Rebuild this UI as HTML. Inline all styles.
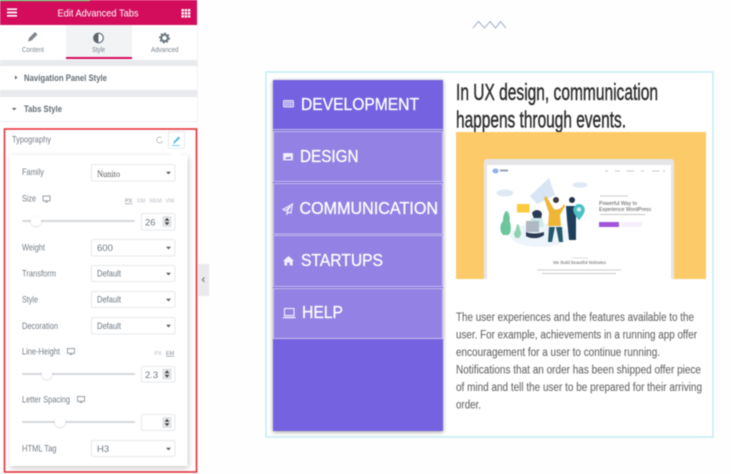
<!DOCTYPE html>
<html><head><meta charset="utf-8">
<style>
html,body{margin:0;padding:0;background:#fff;width:731px;height:474px;overflow:hidden}
svg{display:block;filter:blur(.45px)}
text{font-family:"Liberation Sans",sans-serif}
.l{font-size:9.5px;fill:#757d85}
.v{font-size:9.5px;fill:#6d7882}
.t{font-size:17.5px;fill:#fff;stroke:#fff;stroke-width:.3}
.h{font-size:23.5px;fill:#2a2a2a;stroke:#2a2a2a;stroke-width:.4}
.p{font-size:11.5px;fill:#666;stroke:#666;stroke-width:.08}
.sel{fill:#fff;stroke:#dfe2e6;stroke-width:.8}
.u{font-size:5.5px;fill:#b4bac0}
</style></head><body>
<svg width="731" height="474" viewBox="0 0 731 474" xmlns="http://www.w3.org/2000/svg">
<defs>
<filter id="s" x="-20%" y="-20%" width="140%" height="140%"><feDropShadow dx="1" dy="2" stdDeviation="3" flood-color="#000" flood-opacity=".22"/></filter>
<filter id="s2" x="-20%" y="-20%" width="140%" height="140%"><feDropShadow dx="0" dy="1" stdDeviation="2" flood-color="#000" flood-opacity=".4"/></filter>
<filter id="s3" x="-50%" y="-50%" width="200%" height="200%"><feDropShadow dx="0" dy=".5" stdDeviation=".8" flood-color="#000" flood-opacity=".25"/></filter>
<g id="arrow"><path d="M-2.5 -1.200H2.500L0 1.400Z" fill="#55595e"/></g>
<g id="mon" fill="none" stroke="#8d959d" stroke-width=".9"><rect x="-3.500" y="-3" width="7" height="4.800"/><path d="M-1.500 3H1.500"/></g>
<g id="spin"><rect x="-4" y="-5" width="8" height="10" fill="#e4e6e9" stroke="#c6cacf" stroke-width=".4"/><path d="M-2.400 -.8H2.400L0 -3.800ZM-2.400 .8H2.400L0 3.800Z" fill="#444"/></g>
</defs>
<rect width="731" height="474" fill="#fefefe"/>
<!-- sidebar -->
<rect x="0" y="0" width="197" height="474" fill="#fff"/>
<rect x="197" y="0" width="1" height="474" fill="#f1f2f4"/>
<rect x="0" y="0" width="197" height="25" fill="#d30c5c"/>
<rect x="0" y="0" width="90" height="1.200" fill="#5fb85f"/>
<path d="M7 9.200H17M7 12.500H17M7 15.800H17" stroke="#fff" stroke-width="1.700"/>
<text x="57.500" y="16.500" fill="#fff" textLength="81" lengthAdjust="spacingAndGlyphs" style="font-size:10.500px">Edit Advanced Tabs</text>
<path d="M181.500 9h2.400v2.400h-2.400zM184.700 9h2.400v2.400h-2.400zM187.900 9h2.400v2.400h-2.400zM181.500 12.100h2.400v2.400h-2.400zM184.700 12.100h2.400v2.400h-2.400zM187.900 12.100h2.400v2.400h-2.400zM181.500 15.200h2.400v2.400h-2.400zM184.700 15.200h2.400v2.400h-2.400zM187.900 15.200h2.400v2.400h-2.400z" fill="#fff"/>
<rect x="66" y="25" width="66" height="34" fill="#f2f3f5"/>
<rect x="66" y="57" width="66" height="2" fill="#d30c5c"/>
<rect x="0" y="60" width="197" height="6" fill="#e8eaed"/>
<path d="M28 41.500l1-3.500 6-6 2.500 2.500-6 6z" fill="#7d868e"/>
<text x="22" y="52" fill="#7d868e" textLength="22" lengthAdjust="spacingAndGlyphs" style="font-size:7.500px">Content</text>
<circle cx="98.500" cy="38" r="4.800" fill="#fff" stroke="#5c666f" stroke-width="1.100"/>
<path d="M98.500 33.200a4.800 4.800 0 0 0 0 9.600z" fill="#5c666f"/>
<text x="92" y="52" fill="#7d868e" textLength="13" lengthAdjust="spacingAndGlyphs" style="font-size:7.500px">Style</text>
<circle cx="164.500" cy="38" r="3.300" fill="none" stroke="#6d7882" stroke-width="2.200"/>
<circle cx="164.500" cy="38" r="4.800" fill="none" stroke="#6d7882" stroke-width="1.400" stroke-dasharray="1.800 1.900"/>
<text x="151" y="52" fill="#7d868e" textLength="27.500" lengthAdjust="spacingAndGlyphs" style="font-size:7.500px">Advanced</text>
<path d="M15 75.500v4l2.400-2z" fill="#555c63"/>
<text x="24" y="81" font-weight="bold" fill="#656e76" textLength="83" lengthAdjust="spacingAndGlyphs" style="font-size:9.500px">Navigation Panel Style</text>
<rect x="0" y="90" width="197" height="7" fill="#e8eaed"/>
<path d="M12 108h4.400l-2.200 2.400z" fill="#555c63"/>
<text x="24" y="112" font-weight="bold" fill="#656e76" textLength="38" lengthAdjust="spacingAndGlyphs" style="font-size:9.500px">Tabs Style</text>
<rect x="0" y="121" width="197" height="1" fill="#eceef0"/>
<!-- red box -->
<rect x="4.500" y="129" width="192" height="343" fill="#fff" stroke="#e6323a" stroke-width="1.600"/>
<text x="12" y="142.500" class="l" textLength="39" lengthAdjust="spacingAndGlyphs">Typography</text>
<path d="M161.600 137.600a3 3 0 1 0 .8 3.600" fill="none" stroke="#b4bac0" stroke-width=".9"/>
<rect x="168.500" y="131.500" width="16" height="17" rx="1" fill="#fff" stroke="#e3e6e9" stroke-width=".8"/>
<path d="M173 144l1-2.500 4.500-5 1.500 1.500-4.800 4.800z" fill="#4ab7e0"/>
<path d="M172 145.500h8" stroke="#4ab7e0" stroke-width=".7"/>
<!-- popup -->
<rect x="9.500" y="155" width="178" height="311" rx="2" fill="#fff" filter="url(#s)"/>
<path d="M171 155l5-5 5 5z" fill="#fff"/>
<text x="22" y="175" class="l" textLength="22" lengthAdjust="spacingAndGlyphs">Family</text>
<rect class="sel" x="91.400" y="164.500" width="83.500" height="16.500" rx="1.500"/>
<text x="97" y="177" fill="#555" style="font-family:'Liberation Serif',serif;font-size:9.500px" textLength="23" lengthAdjust="spacingAndGlyphs">Nunito</text>
<use href="#arrow" x="168.500" y="173"/>
<text x="22" y="201.500" class="l" textLength="14" lengthAdjust="spacingAndGlyphs">Size</text>
<use href="#mon" x="46.500" y="199"/>
<text x="125" y="202.500" class="u" style="fill:#7d858d;text-decoration:underline">PX</text>
<text x="137" y="202.500" class="u">EM</text>
<text x="149.500" y="202.500" class="u">REM</text>
<text x="165.500" y="202.500" class="u">VW</text>
<rect x="22" y="220" width="113" height="2" rx="1" fill="#d5d8dc"/>
<circle cx="36" cy="221" r="5.300" fill="#fff" filter="url(#s3)"/>
<rect class="sel" x="141.400" y="213.500" width="33.500" height="16.500" rx="1.500"/>
<text x="145" y="225.500" class="v">26</text>
<use href="#spin" x="167" y="221.500"/>
<text x="22" y="250.500" class="l" textLength="23" lengthAdjust="spacingAndGlyphs">Weight</text>
<rect class="sel" x="91.400" y="239.500" width="83.500" height="16.500" rx="1.500"/>
<text x="97" y="251" class="v">600</text>
<use href="#arrow" x="168.500" y="248"/>
<text x="22" y="276.500" class="l" textLength="34" lengthAdjust="spacingAndGlyphs">Transform</text>
<rect class="sel" x="91.400" y="265.500" width="83.500" height="16" rx="1.500"/>
<text x="97" y="276.500" class="v" textLength="24" lengthAdjust="spacingAndGlyphs">Default</text>
<use href="#arrow" x="168.500" y="274"/>
<text x="22" y="302.500" class="l" textLength="16" lengthAdjust="spacingAndGlyphs">Style</text>
<rect class="sel" x="91.400" y="291.500" width="83.500" height="16" rx="1.500"/>
<text x="97" y="302.500" class="v" textLength="24" lengthAdjust="spacingAndGlyphs">Default</text>
<use href="#arrow" x="168.500" y="300"/>
<text x="22" y="329" class="l" textLength="36" lengthAdjust="spacingAndGlyphs">Decoration</text>
<rect class="sel" x="91.400" y="317.500" width="83.500" height="16.500" rx="1.500"/>
<text x="97" y="329" class="v" textLength="24" lengthAdjust="spacingAndGlyphs">Default</text>
<use href="#arrow" x="168.500" y="326"/>
<text x="22" y="354.500" class="l" textLength="38" lengthAdjust="spacingAndGlyphs">Line-Height</text>
<use href="#mon" x="71" y="351.500"/>
<text x="154.500" y="355" class="u">PX</text>
<text x="166" y="355" class="u" style="fill:#7d858d;text-decoration:underline">EM</text>
<rect x="22" y="373" width="113" height="2" rx="1" fill="#d5d8dc"/>
<circle cx="47" cy="374" r="5.300" fill="#fff" filter="url(#s3)"/>
<rect class="sel" x="141.400" y="366.500" width="33.500" height="15.500" rx="1.500"/>
<text x="145" y="378" class="v">2.3</text>
<use href="#spin" x="167" y="374"/>
<text x="22" y="402.500" class="l" textLength="48" lengthAdjust="spacingAndGlyphs">Letter Spacing</text>
<use href="#mon" x="81" y="399.500"/>
<rect x="22" y="421" width="113" height="2" rx="1" fill="#d5d8dc"/>
<circle cx="60" cy="422" r="5.300" fill="#fff" filter="url(#s3)"/>
<rect class="sel" x="141.400" y="414.500" width="33.500" height="16" rx="1.500"/>
<use href="#spin" x="167" y="422.500"/>
<text x="22" y="451.500" class="l" textLength="34.500" lengthAdjust="spacingAndGlyphs">HTML Tag</text>
<rect class="sel" x="91.400" y="440.500" width="83.500" height="16" rx="1.500"/>
<text x="97" y="452" class="v">H3</text>
<use href="#arrow" x="168.500" y="449"/>
<!-- collapse handle -->
<rect x="198" y="264" width="11" height="32" fill="#e8eaed"/>
<path d="M204.500 277.500l-2.200 2.200 2.200 2.200" fill="none" stroke="#6d7882" stroke-width="1"/>
<!-- zigzag -->
<path d="M473 28l5.500-6.500 6 6.500 5.500-6.500 5.500 6.500 5-6.500 5.500 6.500" fill="none" stroke="#a9b8c9" stroke-width="1.100"/>
<!-- frame -->
<rect x="266" y="72" width="447" height="365" fill="#fff" stroke="#c8edf5" stroke-width="1.600"/>
<!-- tabs -->
<rect x="273" y="80" width="170" height="351" fill="#7562e0" filter="url(#s2)"/>
<rect x="273.500" y="131.500" width="169" height="50" fill="#9382e3" stroke="#c6bfed" stroke-width="1"/>
<rect x="273.500" y="183.500" width="169" height="50.500" fill="#9382e3" stroke="#c6bfed" stroke-width="1"/>
<rect x="273.500" y="235.500" width="169" height="51" fill="#9382e3" stroke="#c6bfed" stroke-width="1"/>
<rect x="273.500" y="288.500" width="169" height="50" fill="#9382e3" stroke="#c6bfed" stroke-width="1"/>
<rect x="273" y="129" width="170" height="1" fill="#c6bfed"/>
<!-- tab icons -->
<rect x="283.500" y="100.500" width="10" height="6.500" rx="1" fill="#a99ce9" stroke="#e8e4fa" stroke-width="1"/>
<path d="M285 102.500h7M285 104.800h7" stroke="#e8e4fa" stroke-width=".9" stroke-dasharray="1 .6"/>
<text x="301" y="110" class="t" textLength="118" lengthAdjust="spacingAndGlyphs">DEVELOPMENT</text>
<rect x="283.500" y="153.500" width="9" height="6.500" fill="#f3f1fc" stroke="#f3f1fc" stroke-width=".7"/>
<path d="M285 159l2-2.400 1.400 1.200 1.400-1.800 1.600 3z" fill="#8d7be2"/>
<text x="300" y="162" class="t" textLength="58.500" lengthAdjust="spacingAndGlyphs">DESIGN</text>
<path d="M292.500 204l-9.500 5.500 2.600 1.200 5-4.400-3.600 5.200v2.500l1.700-1.900 2.200 1z" fill="none" stroke="#f3f1fc" stroke-width="1.100"/>
<text x="299.500" y="214" class="t" textLength="138.500" lengthAdjust="spacingAndGlyphs">COMMUNICATION</text>
<path d="M283 261l5.500-5 5.500 5h-1.400v4.500h-2.800v-3h-2.600v3h-2.800V261z" fill="#f3f1fc"/>
<text x="301" y="266" class="t" textLength="82" lengthAdjust="spacingAndGlyphs">STARTUPS</text>
<rect x="284.500" y="308.500" width="9.500" height="7" fill="none" stroke="#f3f1fc" stroke-width="1.100"/>
<path d="M283 317.500h12.500" stroke="#f3f1fc" stroke-width="1.400"/>
<text x="302" y="318" class="t" textLength="41" lengthAdjust="spacingAndGlyphs">HELP</text>
<!-- heading -->
<text x="456" y="100" class="h" textLength="202" lengthAdjust="spacingAndGlyphs">In UX design, communication</text>
<text x="456" y="127.500" class="h" textLength="170" lengthAdjust="spacingAndGlyphs">happens through events.</text>
<!-- image -->
<rect x="456" y="132" width="250" height="147" fill="#fdca69"/>
<path d="M484 279V162a3 3 0 0 1 3-3h184a3 3 0 0 1 3 3v117z" fill="#e5e5e8"/>
<rect x="487" y="165" width="184" height="114" fill="#fff"/>
<ellipse cx="495.500" cy="171" rx="3" ry="2.500" fill="#8fb0ea"/>
<rect x="500" y="169.500" width="8" height="2" fill="#9aa0b0"/>
<path d="M605 171h3M615 171h5M627 171h7M641 171h3M652 171h7M663 171h2" stroke="#c4c6cd" stroke-width="1.100"/>
<ellipse cx="505" cy="193" rx="8.500" ry="3.500" fill="#dfe9f4"/>
<ellipse cx="580" cy="185" rx="7.500" ry="2.800" fill="#dfe9f4"/>
<path d="M530 196l19-18 6 17-18 9z" fill="#d7e5f4"/>
<ellipse cx="540" cy="235" rx="30" ry="12" fill="#eef5fa"/>
<path d="M503 235c-4-4-3-11 0-14 0-6 2-10 3.500-10 2 0 4 6 3 10 2 5 2 11-1 14z" fill="#6cc59b"/>
<path d="M516 238c-3-3-2-6 0-8 0-3 1-6 2-6 1 1 2 4 2 6 2 3 1 6-1 8z" fill="#8dd2ae"/>
<rect x="517" y="204" width="12.500" height="8.500" fill="#fdca3e"/>
<path d="M532 213c2-4 9-4 10 1l-1 5h-7z" fill="#2c3b55"/>
<path d="M531 218h11l2 9h-14z" fill="#cdeae6"/>
<rect x="526" y="221" width="13" height="11" fill="#aeb7c2"/>
<path d="M526 232c4 2 12 2 18 0l0 3c-4 4-14 4-18 1z" fill="#2c3b55"/>
<path d="M546 196l8 13c2 1 7 1 10-5l1 2-5 9 1 11h-13l1-13-5-15z" fill="#efb635"/>
<circle cx="556" cy="200" r="3" fill="#3d3a3a"/>
<path d="M549 227h6l-3 15h-4zM556 227h6l1 15h-4z" fill="#24586b"/>
<circle cx="572" cy="200" r="3" fill="#24344e"/>
<path d="M566 206h11l-1 12v22h-7l-2-20z" fill="#1e3f5b"/>
<path d="M579 204a5.800 5.800 0 0 1 5.800 5.800c0 4-5.800 10.500-5.800 10.500s-5.800-6.500-5.800-10.500a5.800 5.800 0 0 1 5.800-5.800z" fill="#4cc0c4"/>
<circle cx="579" cy="209.500" r="2.200" fill="#d8f2f3"/>
<path d="M600 196h28" stroke="#aaa" stroke-width="1" opacity=".6"/>
<text x="599" y="205" fill="#555" textLength="38" lengthAdjust="spacingAndGlyphs" style="font-size:5.500px">Powerful Way to</text>
<text x="599" y="211" fill="#555" textLength="52" lengthAdjust="spacingAndGlyphs" style="font-size:5.500px">Experience WordPress</text>
<path d="M600 214.500h45" stroke="#c4c4c4" stroke-width="1"/>
<rect x="599" y="222" width="20" height="5" fill="#a054d8"/>
<rect x="622" y="222" width="20" height="5" fill="#f6eefb"/>
<path d="M572 258h16" stroke="#ddd" stroke-width="1"/>
<text x="553" y="264" fill="#666" textLength="53" lengthAdjust="spacingAndGlyphs" style="font-size:4.500px">We Build Beautiful Websites</text>
<path d="M537 270h84M542 273.500h74" stroke="#ccc" stroke-width="1"/>
<!-- paragraph -->
<text x="456" y="321" class="p" textLength="238" lengthAdjust="spacingAndGlyphs">The user experiences and the features available to the</text>
<text x="456" y="338.500" class="p" textLength="241" lengthAdjust="spacingAndGlyphs">user. For example, achievements in a running app offer</text>
<text x="456" y="356" class="p" textLength="204" lengthAdjust="spacingAndGlyphs">encouragement for a user to continue running.</text>
<text x="456" y="373.500" class="p" textLength="245" lengthAdjust="spacingAndGlyphs">Notifications that an order has been shipped offer piece</text>
<text x="456" y="391" class="p" textLength="246" lengthAdjust="spacingAndGlyphs">of mind and tell the user to be prepared for their arriving</text>
<text x="456" y="408.500" class="p" textLength="25" lengthAdjust="spacingAndGlyphs">order.</text>
</svg>
</body></html>
